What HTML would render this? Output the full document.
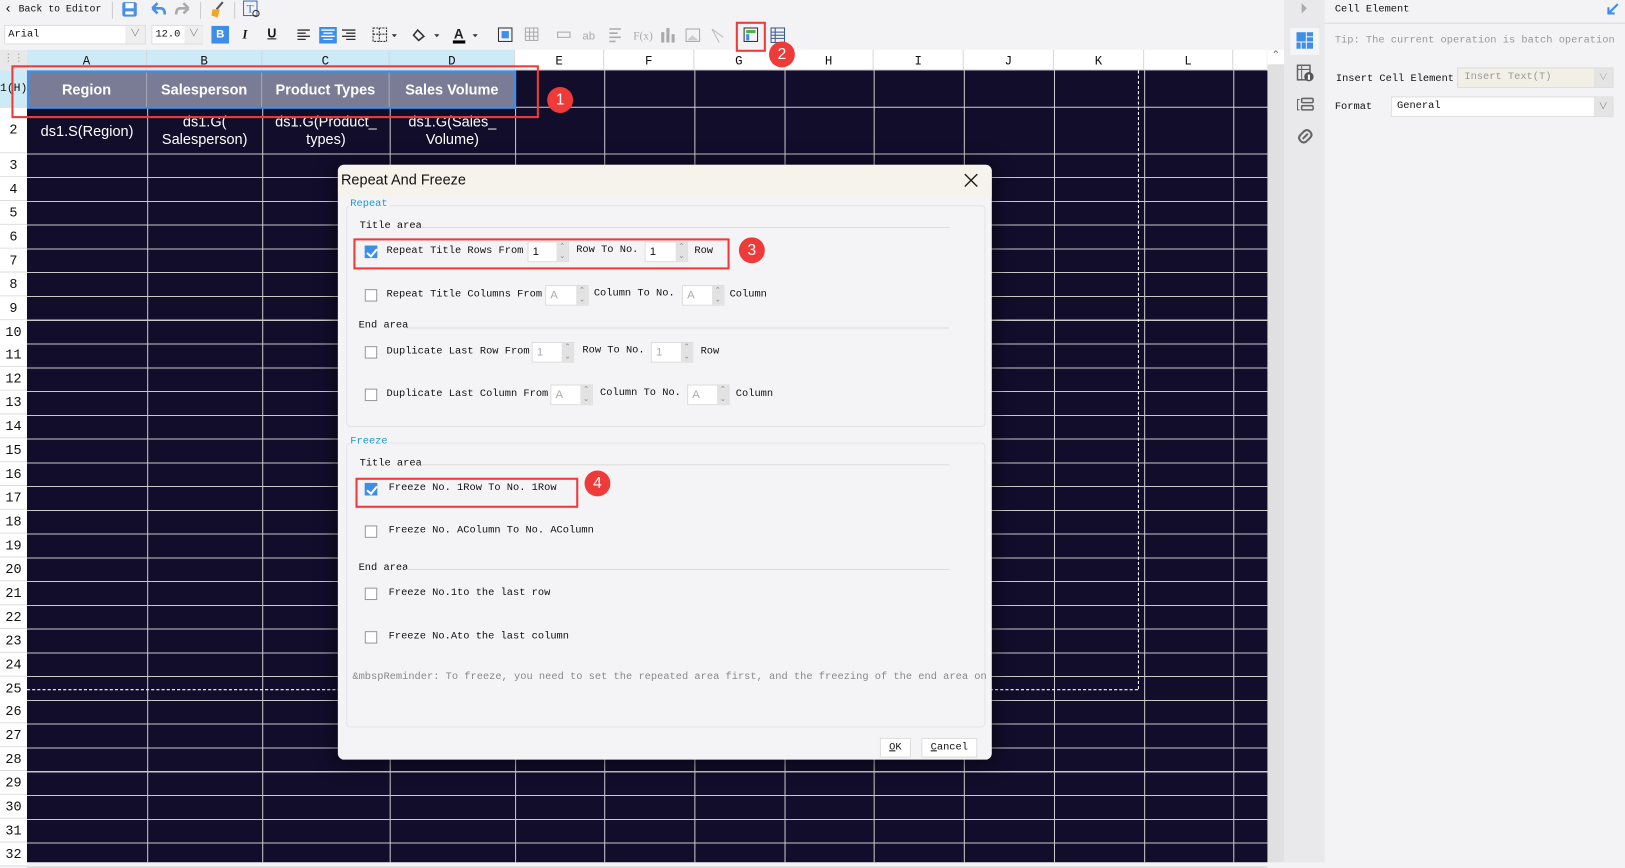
<!DOCTYPE html>
<html><head><meta charset="utf-8">
<style>
*{margin:0;padding:0;box-sizing:border-box}
html,body{width:1625px;height:862px;overflow:hidden;background:#f3f3f6}
#w{position:absolute;left:0;top:0;width:1568px;height:832px;transform:scale(1.03635);transform-origin:0 0;font-family:"Liberation Mono","Noto Serif CJK SC",monospace;font-size:10px;color:#111}
.a{position:absolute}
.t{position:absolute;white-space:nowrap}
.vl{position:absolute;top:68px;width:1px;height:764px;background:#c9c9c9}
.ch{position:absolute;top:48px;height:20px;line-height:22px;text-align:center;font-size:12px;border-right:1px solid #d8d8d8}
.rn{position:absolute;left:0;width:26px;text-align:center;font-size:13px;background:#fff;border-bottom:1px solid #ddd}
.hc{position:absolute;top:68px;height:36px;text-align:center;color:#fff;font:bold 14px "Liberation Sans",sans-serif;line-height:36px;background:#7a7c96;border-right:1px solid #a9abbd}
.c2{position:absolute;top:104px;height:44px;text-align:center;color:#fff;font:14px "Liberation Sans",sans-serif;line-height:17px;display:flex;align-items:center;justify-content:center}
.cb{position:absolute;width:12px;height:12px;border:1px solid #999;background:#fff}
.cb.on{background:#3d8ee8;border-color:#3d8ee8}
.cb.on:after{content:"";position:absolute;left:3px;top:0px;width:4px;height:8px;border:solid #fff;border-width:0 2px 2px 0;transform:rotate(40deg)}
.in{position:absolute;height:20px;background:#fff;border:1px solid #ddd;font:11px "Liberation Sans",sans-serif;line-height:18px;padding-left:4px}
.in .sp{position:absolute;right:0;top:0;width:11px;height:18px;background:#e2e2e2;color:#888;font-size:7px;line-height:9px;text-align:center}
.dis{color:#aaa}
.lg{position:absolute;color:#1a98d8;font-size:10px;background:#f4f4f6;padding:0 1px}
.hr{position:absolute;height:1px;background:#dcdcdc}
.circ{position:absolute;width:25px;height:25px;border-radius:50%;background:#ef3a3a;color:#fff;font:15px "Liberation Sans",sans-serif;line-height:25px;text-align:center;z-index:5}
.rb{position:absolute;border:2px solid #ef3a3a;z-index:4}
</style></head><body><div id="w">

<!-- toolbar -->
<div class="t" style="left:4px;top:1px;font-size:13px">&lsaquo;</div>
<div class="t" style="left:18px;top:3px;font-size:9.5px">Back to Editor</div>
<div class="a" style="left:108px;top:2px;width:1px;height:16px;background:#ccc"></div>
<svg class="a" style="left:117px;top:1px" width="16" height="16"><rect x="1" y="1" width="14" height="14" rx="2" fill="#4a90e2"/><rect x="4" y="2" width="8" height="5" fill="#fff"/><rect x="4" y="10" width="8" height="3" fill="#fff"/></svg>
<svg class="a" style="left:143px;top:1px" width="18" height="16"><path d="M4 7 L9 2 M4 7 L9 12 M4 7 H12 Q16 7 16 13" stroke="#4a90e2" stroke-width="2.5" fill="none"/></svg>
<svg class="a" style="left:168px;top:1px" width="18" height="16"><path d="M14 7 L9 2 M14 7 L9 12 M14 7 H6 Q2 7 2 13" stroke="#aaa" stroke-width="2.5" fill="none"/></svg>
<div class="a" style="left:193px;top:2px;width:1px;height:16px;background:#ccc"></div>
<svg class="a" style="left:201px;top:0" width="18" height="18"><path d="M14 2 L8 9" stroke="#555" stroke-width="2"/><path d="M4 9 L11 9 L9 17 L3 15Z" fill="#f0a81c"/></svg>
<div class="a" style="left:226px;top:2px;width:1px;height:16px;background:#ccc"></div>
<svg class="a" style="left:234px;top:0" width="18" height="18"><rect x="1" y="1" width="13" height="14" fill="none" stroke="#3a6fb0"/><text x="4" y="12" font-size="11" font-family="Liberation Serif" fill="#3a6fb0">T</text><circle cx="13" cy="13" r="3" fill="none" stroke="#333"/></svg>

<div class="a" style="left:4px;top:24px;width:137px;height:19px;background:#fff;border:1px solid #ddd"></div>
<div class="t" style="left:8px;top:28px;font-size:10px">Arial</div>
<div class="a" style="left:121px;top:25px;width:19px;height:17px;background:#eee;color:#666;text-align:center;font-size:10px;line-height:17px">&#8744;</div>
<div class="a" style="left:146px;top:24px;width:50px;height:19px;background:#fff;border:1px solid #ddd"></div>
<div class="t" style="left:150px;top:28px;font-size:10px">12.0</div>
<div class="a" style="left:178px;top:25px;width:18px;height:17px;background:#eee;color:#666;text-align:center;font-size:10px;line-height:17px">&#8744;</div>
<div class="a" style="left:204px;top:25px;width:17px;height:17px;background:#3d8ee8;color:#fff;font:bold 11px 'Liberation Sans';line-height:17px;text-align:center">B</div>
<div class="t" style="left:234px;top:26px;font:italic bold 12px 'Liberation Serif'">I</div>
<div class="t" style="left:258px;top:25px;font:bold 12px 'Liberation Sans';text-decoration:underline">U</div>
<svg class="a" style="left:286px;top:26px" width="60" height="16"><g stroke="#333" stroke-width="1.3"><path d="M1 3H13M1 6H9M1 9H13M1 12H9"/></g><rect x="22" y="-1" width="17" height="17" fill="#3d8ee8"/><g stroke="#fff" stroke-width="1.3"><path d="M24 3H37M26 6H35M24 9H37M26 12H35"/></g><g stroke="#333" stroke-width="1.3"><path d="M44 3H57M48 6H57M44 9H57M48 12H57"/></g></svg>
<svg class="a" style="left:359px;top:26px" width="110" height="18"><rect x="1" y="1" width="13" height="13" fill="none" stroke="#333" stroke-dasharray="2 1"/><path d="M1 7H14M7 1V14" stroke="#333" stroke-dasharray="2 1"/><path d="M19 7L24 7L21.5 10Z" fill="#333"/><path d="M44 3L50 9L45 13L40 8Z" fill="none" stroke="#333" stroke-width="1.5"/><path d="M60 7L65 7L62.5 10Z" fill="#333"/><text x="79" y="11" font-size="13" font-weight="bold" font-family="Liberation Sans" fill="#222">A</text><rect x="78" y="13" width="12" height="3" fill="#000"/><path d="M97 7L102 7L99.5 10Z" fill="#333"/></svg>
<svg class="a" style="left:480px;top:24px" width="290" height="20"><rect x="1" y="3" width="13" height="13" fill="none" stroke="#333"/><rect x="4" y="6" width="7" height="7" fill="#3d8ee8"/><g stroke="#aaa" fill="none"><rect x="27" y="3" width="12" height="12"/><path d="M27 7H39M27 11H39M31 3V15M35 3V15"/><rect x="58" y="7" width="12" height="5"/></g><text x="82" y="14" font-size="11" fill="#aaa" font-family="Liberation Sans">ab</text><g stroke="#aaa" stroke-width="1.5"><path d="M108 4H119M108 8H116M108 12H119M108 16H114"/></g><text x="131" y="14" font-size="11" fill="#aaa" font-family="Liberation Serif">F(x)</text><g fill="#aaa"><rect x="158" y="7" width="3" height="10"/><rect x="163" y="3" width="3" height="14"/><rect x="168" y="9" width="3" height="8"/></g><rect x="182" y="4" width="13" height="12" fill="none" stroke="#aaa"/><path d="M183 15L188 10L194 15Z" fill="#ccc"/><path d="M207 4L218 12M207 4L214 17" stroke="#bbb"/><rect x="238" y="3" width="13" height="13" fill="none" stroke="#333"/><rect x="240" y="5" width="9" height="3" fill="#4caf50"/><rect x="240" y="9" width="3" height="6" fill="#3d8ee8"/><rect x="264" y="3" width="13" height="14" fill="none" stroke="#3a5a8a"/><path d="M264 7H277M264 10H277M264 13H277M268 3V17" stroke="#3a5a8a"/></svg>

<!-- header row -->
<div class="a" style="left:0;top:48px;width:1222px;height:20px;background:#fff;border-bottom:1px solid #ccc"></div>
<div class="a" style="left:0;top:48px;width:26px;height:20px;background:#e8e8e8;color:#aaa;font-size:10px;text-align:center;line-height:20px">&#8942;&#8942;</div>
<div class="a" style="left:26px;top:48px;width:471px;height:20px;background:#cdeaf7"></div>
<div class="ch" style="left:26px;width:116px">A</div><div class="ch" style="left:142px;width:111px">B</div><div class="ch" style="left:253px;width:123px">C</div><div class="ch" style="left:376px;width:121px">D</div><div class="ch" style="left:497px;width:86px">E</div><div class="ch" style="left:583px;width:87px">F</div><div class="ch" style="left:670px;width:87px">G</div><div class="ch" style="left:757px;width:86px">H</div><div class="ch" style="left:843px;width:87px">I</div><div class="ch" style="left:930px;width:87px">J</div><div class="ch" style="left:1017px;width:87px">K</div><div class="ch" style="left:1104px;width:86px">L</div>
<div class="rb" style="left:710px;top:21px;width:29px;height:29px"></div>
<div class="circ" style="left:742px;top:40px">2</div>

<!-- grid -->
<div class="a" style="left:26px;top:68px;width:1197px;height:764px;background:#110d2b"></div>
<div class="a" style="left:26px;top:148px;width:1197px;height:690px;background:repeating-linear-gradient(to bottom,#c9c9c9 0,#c9c9c9 1px,transparent 1px,transparent 22.93px)"></div>
<div class="a" style="left:26px;top:103px;width:1197px;height:1px;background:#c9c9c9"></div>
<div class="vl" style="left:142px"></div><div class="vl" style="left:253px"></div><div class="vl" style="left:376px"></div><div class="vl" style="left:497px"></div><div class="vl" style="left:583px"></div><div class="vl" style="left:670px"></div><div class="vl" style="left:757px"></div><div class="vl" style="left:843px"></div><div class="vl" style="left:930px"></div><div class="vl" style="left:1017px"></div><div class="vl" style="left:1104px"></div><div class="vl" style="left:1190px"></div>
<div class="hc" style="left:26px;width:116px">Region</div><div class="hc" style="left:142px;width:111px">Salesperson</div><div class="hc" style="left:253px;width:123px">Product Types</div><div class="hc" style="left:376px;width:121px">Sales Volume</div>
<div class="a" style="left:26px;top:68px;width:472px;height:37px;border:2px solid #3d8ee8"></div>
<div class="c2" style="left:26px;width:116px">ds1.S(Region)</div><div class="c2" style="left:142px;width:111px">ds1.G(<br>Salesperson)</div><div class="c2" style="left:253px;width:123px">ds1.G(Product_<br>types)</div><div class="c2" style="left:376px;width:121px">ds1.G(Sales_<br>Volume)</div>
<div class="a" style="left:1098px;top:68px;width:0;height:597px;border-left:1px dashed #fff"></div>
<div class="a" style="left:26px;top:665px;width:1072px;height:0;border-top:1px dashed #fff"></div>
<div class="rb" style="left:11px;top:63px;width:509px;height:51px"></div>
<div class="circ" style="left:528px;top:84px">1</div>

<!-- row numbers -->
<div class="rn" style="top:68px;height:36px;line-height:36px;background:#cdeaf7;font-size:11px">1(H)</div>
<div class="rn" style="top:104px;height:44px;line-height:44px">2</div>
<div class="rn" style="top:148px;height:23px;line-height:23px">3</div><div class="rn" style="top:171px;height:23px;line-height:23px">4</div><div class="rn" style="top:194px;height:23px;line-height:23px">5</div><div class="rn" style="top:217px;height:23px;line-height:23px">6</div><div class="rn" style="top:240px;height:23px;line-height:23px">7</div><div class="rn" style="top:263px;height:23px;line-height:23px">8</div><div class="rn" style="top:286px;height:23px;line-height:23px">9</div><div class="rn" style="top:309px;height:23px;line-height:23px">10</div><div class="rn" style="top:331px;height:23px;line-height:23px">11</div><div class="rn" style="top:354px;height:23px;line-height:23px">12</div><div class="rn" style="top:377px;height:23px;line-height:23px">13</div><div class="rn" style="top:400px;height:23px;line-height:23px">14</div><div class="rn" style="top:423px;height:23px;line-height:23px">15</div><div class="rn" style="top:446px;height:23px;line-height:23px">16</div><div class="rn" style="top:469px;height:23px;line-height:23px">17</div><div class="rn" style="top:492px;height:23px;line-height:23px">18</div><div class="rn" style="top:515px;height:23px;line-height:23px">19</div><div class="rn" style="top:538px;height:23px;line-height:23px">20</div><div class="rn" style="top:561px;height:23px;line-height:23px">21</div><div class="rn" style="top:584px;height:23px;line-height:23px">22</div><div class="rn" style="top:607px;height:23px;line-height:23px">23</div><div class="rn" style="top:630px;height:23px;line-height:23px">24</div><div class="rn" style="top:653px;height:23px;line-height:23px">25</div><div class="rn" style="top:675px;height:23px;line-height:23px">26</div><div class="rn" style="top:698px;height:23px;line-height:23px">27</div><div class="rn" style="top:721px;height:23px;line-height:23px">28</div><div class="rn" style="top:744px;height:23px;line-height:23px">29</div><div class="rn" style="top:767px;height:23px;line-height:23px">30</div><div class="rn" style="top:790px;height:23px;line-height:23px">31</div><div class="rn" style="top:813px;height:23px;line-height:23px">32</div>

<!-- scrollbar & sidebar -->
<div class="a" style="left:1223px;top:48px;width:16px;height:784px;background:#e0e0e0"></div>
<div class="a" style="left:1223px;top:48px;width:16px;height:14px;background:#fff;color:#666;font-size:10px;text-align:center;line-height:14px">&#8963;</div>
<div class="a" style="left:1239px;top:0;width:39px;height:832px;background:#e9e9eb"></div>
<div class="a" style="left:1256px;top:3px;width:0;height:0;border-left:5px solid #aaa;border-top:5px solid transparent;border-bottom:5px solid transparent"></div>
<div class="a" style="left:1245px;top:27px;width:28px;height:26px;background:#f5f5f7"></div>
<svg class="a" style="left:1251px;top:31px" width="17" height="17"><rect x="0" y="0" width="9" height="9" fill="#3d8ee8"/><rect x="10" y="0" width="6" height="4" fill="#3d8ee8"/><rect x="10" y="5" width="6" height="4" fill="#3d8ee8"/><rect x="0" y="10" width="4" height="6" fill="#3d8ee8"/><rect x="5" y="10" width="4" height="6" fill="#3d8ee8"/><rect x="10" y="10" width="6" height="6" fill="#3d8ee8"/></svg>
<svg class="a" style="left:1251px;top:62px" width="17" height="17"><rect x="1" y="1" width="12" height="14" fill="none" stroke="#666" stroke-width="1.5"/><path d="M1 5H13M5 1V15" stroke="#666"/><circle cx="12" cy="12" r="4.5" fill="#555"/><rect x="11" y="10" width="2" height="5" fill="#fff"/></svg>
<svg class="a" style="left:1251px;top:94px" width="17" height="14"><path d="M3 2H1V12H3" stroke="#666" fill="none"/><rect x="5" y="1" width="11" height="4" rx="1" fill="none" stroke="#666" stroke-width="1.5"/><rect x="5" y="8" width="11" height="4" rx="1" fill="none" stroke="#666" stroke-width="1.5"/></svg>
<svg class="a" style="left:1251px;top:123px" width="17" height="17"><path d="M7 4 L4 7 Q1 10 4 13 Q7 16 10 13 M10 13 L13 10 Q16 7 13 4 Q10 1 7 4 M6 11 L11 6" stroke="#666" stroke-width="2" fill="none"/></svg>

<!-- right panel -->
<div class="t" style="left:1288px;top:4px;font-size:10px">Cell Element</div>
<svg class="a" style="left:1549px;top:2px" width="14" height="14"><path d="M12 2L3 11M3 5V11H9" stroke="#3d8ee8" stroke-width="2" fill="none"/></svg>
<div class="a" style="left:1278px;top:22px;width:290px;height:1px;background:#ddd"></div>
<div class="t" style="left:1288px;top:34px;font-size:10px;color:#999">Tip: The current operation is batch operation</div>
<div class="t" style="left:1289px;top:71px;font-size:10px">Insert Cell Element</div>
<div class="a" style="left:1406px;top:65px;width:151px;height:20px;background:#f1efe6;border:1px solid #ddd;color:#999;font-size:10px;line-height:18px;padding-left:6px">Insert Text(T)</div>
<div class="a" style="left:1538px;top:66px;width:18px;height:18px;background:#e4e4e4;color:#999;text-align:center;font-size:9px;line-height:18px">&#8744;</div>
<div class="t" style="left:1288px;top:98px;font-size:10px">Format</div>
<div class="a" style="left:1342px;top:93px;width:215px;height:20px;background:#fff;border:1px solid #ddd;font-size:10px;line-height:18px;padding-left:5px">General</div>
<div class="a" style="left:1538px;top:94px;width:18px;height:18px;background:#e4e4e4;color:#666;text-align:center;font-size:9px;line-height:18px">&#8744;</div>

<!-- dialog -->
<div class="a" style="left:326px;top:159px;width:631px;height:574px;background:#f4f4f6;border-radius:6px;box-shadow:0 2px 20px rgba(0,0,0,.6);overflow:hidden">
 <div class="a" style="left:0;top:0;width:631px;height:31px;background:#f6f3ec"></div>
</div>
<div class="t" style="left:329px;top:165px;font:14px 'Liberation Sans',sans-serif">Repeat And Freeze</div>
<svg class="a" style="left:930px;top:167px" width="14" height="14"><path d="M1 1L13 13M13 1L1 13" stroke="#222" stroke-width="1.4"/></svg>

<div class="a" style="left:334px;top:198px;width:617px;height:214px;border:1px solid #e3e3e6;border-radius:4px"></div>
<div class="lg" style="left:337px;top:192px">Repeat</div>
<div class="t" style="left:347px;top:213px">Title area</div><div class="hr" style="left:406px;top:219px;width:510px"></div>
<div class="cb on" style="left:352px;top:237px"></div><div class="t" style="left:373px;top:237px">Repeat Title Rows From</div>
<div class="in" style="left:509px;top:233px;width:40px">1<div class="sp">&#8963;<br>&#8964;</div></div>
<div class="t" style="left:556px;top:236px">Row To No.</div>
<div class="in" style="left:622px;top:233px;width:42px">1<div class="sp">&#8963;<br>&#8964;</div></div>
<div class="t" style="left:670px;top:237px">Row</div>
<div class="rb" style="left:341px;top:230px;width:363px;height:30px"></div>
<div class="circ" style="left:713px;top:229px">3</div>

<div class="cb" style="left:352px;top:279px"></div><div class="t" style="left:373px;top:279px">Repeat Title Columns From</div>
<div class="in dis" style="left:526px;top:275px;width:42px">A<div class="sp">&#8963;<br>&#8964;</div></div>
<div class="t" style="left:573px;top:278px">Column To No.</div>
<div class="in dis" style="left:658px;top:275px;width:41px">A<div class="sp">&#8963;<br>&#8964;</div></div>
<div class="t" style="left:704px;top:279px">Column</div>

<div class="t" style="left:346px;top:309px">End area</div><div class="hr" style="left:392px;top:316px;width:524px"></div>
<div class="cb" style="left:352px;top:334px"></div><div class="t" style="left:373px;top:334px">Duplicate Last Row From</div>
<div class="in dis" style="left:513px;top:330px;width:41px">1<div class="sp">&#8963;<br>&#8964;</div></div>
<div class="t" style="left:562px;top:333px">Row To No.</div>
<div class="in dis" style="left:628px;top:330px;width:41px">1<div class="sp">&#8963;<br>&#8964;</div></div>
<div class="t" style="left:676px;top:334px">Row</div>

<div class="cb" style="left:352px;top:375px"></div><div class="t" style="left:373px;top:375px">Duplicate Last Column From</div>
<div class="in dis" style="left:531px;top:371px;width:41px">A<div class="sp">&#8963;<br>&#8964;</div></div>
<div class="t" style="left:579px;top:374px">Column To No.</div>
<div class="in dis" style="left:663px;top:371px;width:41px">A<div class="sp">&#8963;<br>&#8964;</div></div>
<div class="t" style="left:710px;top:375px">Column</div>

<div class="a" style="left:334px;top:427px;width:617px;height:275px;border:1px solid #e3e3e6;border-radius:4px"></div>
<div class="lg" style="left:337px;top:421px">Freeze</div>
<div class="t" style="left:347px;top:442px">Title area</div><div class="hr" style="left:406px;top:448px;width:510px"></div>
<div class="cb on" style="left:352px;top:466px"></div><div class="t" style="left:375px;top:466px">Freeze No. 1Row To No. 1Row</div>
<div class="rb" style="left:343px;top:461px;width:215px;height:29px"></div>
<div class="circ" style="left:564px;top:454px">4</div>
<div class="cb" style="left:352px;top:507px"></div><div class="t" style="left:375px;top:507px">Freeze No. AColumn To No. AColumn</div>
<div class="t" style="left:346px;top:543px">End area</div><div class="hr" style="left:392px;top:549px;width:524px"></div>
<div class="cb" style="left:352px;top:567px"></div><div class="t" style="left:375px;top:567px">Freeze No.1to the last row</div>
<div class="cb" style="left:352px;top:609px"></div><div class="t" style="left:375px;top:609px">Freeze No.Ato the last column</div>
<div class="a" style="left:340px;top:648px;width:612px;height:14px;overflow:hidden;white-space:nowrap;color:#888">&amp;mbspReminder: To freeze, you need to set the repeated area first, and the freezing of the end area only takes effect</div>

<div class="a" style="left:849px;top:712px;width:30px;height:19px;background:#fff;border:1px solid #ddd;text-align:center;line-height:17px"><u>O</u>K</div>
<div class="a" style="left:889px;top:712px;width:54px;height:19px;background:#fff;border:1px solid #ddd;text-align:center;line-height:17px"><u>C</u>ancel</div>

</div></body></html>
